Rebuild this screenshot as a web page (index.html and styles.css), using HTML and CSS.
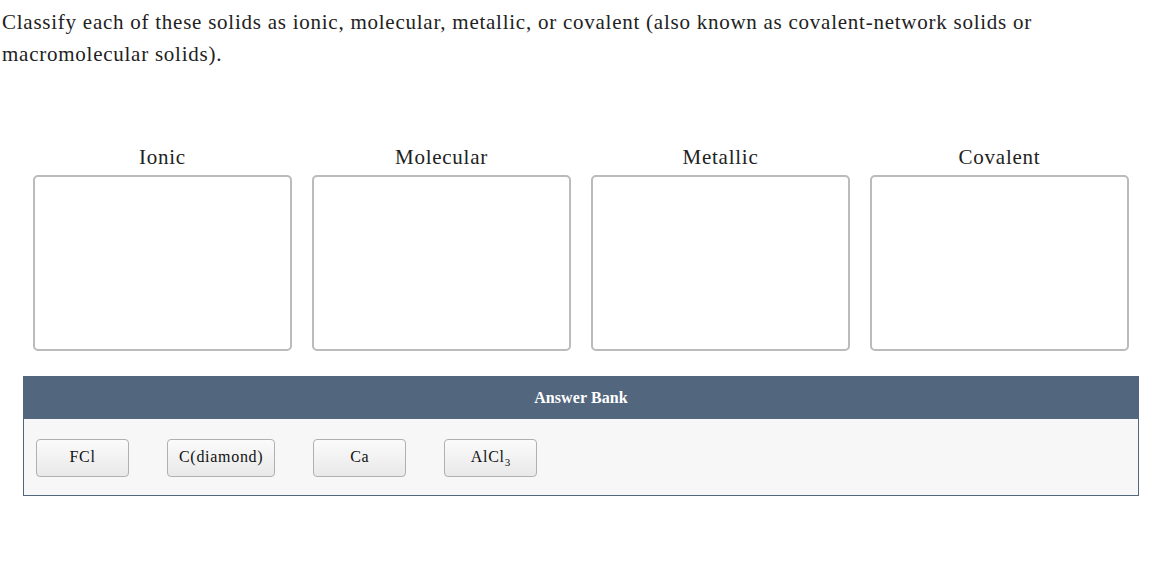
FILE: index.html
```html
<!DOCTYPE html>
<html lang="en">
<head>
  <meta charset="UTF-8">
  <title>Classify Solids</title>
  <link rel="stylesheet" href="styles.css">
</head>
<body>

  <p class="prompt">Classify each of these solids as ionic, molecular, metallic, or covalent (also known as covalent-network solids or macromolecular solids).</p>

  <div class="bins">
    <div class="bin">
      <div class="bin-label">Ionic</div>
      <div class="drop-zone"></div>
    </div>
    <div class="bin">
      <div class="bin-label">Molecular</div>
      <div class="drop-zone"></div>
    </div>
    <div class="bin">
      <div class="bin-label">Metallic</div>
      <div class="drop-zone"></div>
    </div>
    <div class="bin">
      <div class="bin-label">Covalent</div>
      <div class="drop-zone"></div>
    </div>
  </div>

  <div class="answer-bank">
    <div class="bank-header">Answer Bank</div>
    <div class="bank-items">
      <div class="chip">FCl</div>
      <div class="chip">C(diamond)</div>
      <div class="chip">Ca</div>
      <div class="chip">AlCl<sub>3</sub></div>
    </div>
  </div>

</body>
</html>
```

FILE: styles.css
```css
body {
  margin: 0;
  font-family: "Liberation Serif", "Times New Roman", serif;
  color: #222;
  background: #fff;
}

.prompt {
  margin: 6px 0 0 2px;
  max-width: 1040px;
  font-size: 21px;
  letter-spacing: 0.75px;
  line-height: 32px;
}

.bins {
  display: grid;
  grid-template-columns: repeat(4, 1fr);
  width: 1116px;
  margin: 75px 0 0 23px;
}

.bin {
  padding: 0 10px;
}

.bin-label {
  text-align: center;
  font-size: 21px;
  letter-spacing: 0.75px;
  line-height: 24px;
  margin-bottom: 6px;
}

.drop-zone {
  height: 172px;
  border: 2px solid #bbb;
  border-radius: 5px;
  background: #fff;
}

.answer-bank {
  width: 1116px;
  margin: 25px 0 0 23px;
}

.bank-header {
  height: 43px;
  line-height: 43px;
  background: #52667e;
  color: #fff;
  text-align: center;
  font-weight: bold;
  font-size: 16px;
  letter-spacing: 0.1px;
}

.bank-items {
  display: flex;
  gap: 38px;
  padding: 20px 12px 18px;
  background: #f7f7f7;
  border: 1px solid #52667e;
  border-top: none;
}

.chip {
  min-width: 93px;
  height: 38px;
  line-height: 34px;
  padding: 0 11px;
  box-sizing: border-box;
  text-align: center;
  font-size: 16px;
  letter-spacing: 0.7px;
  color: #111;
  border: 1px solid #b0b0b0;
  border-radius: 4px;
  background: linear-gradient(#fbfbfb, #e9e9e9);
}

.chip sub {
  font-size: 11px;
  line-height: 0;
}
```
